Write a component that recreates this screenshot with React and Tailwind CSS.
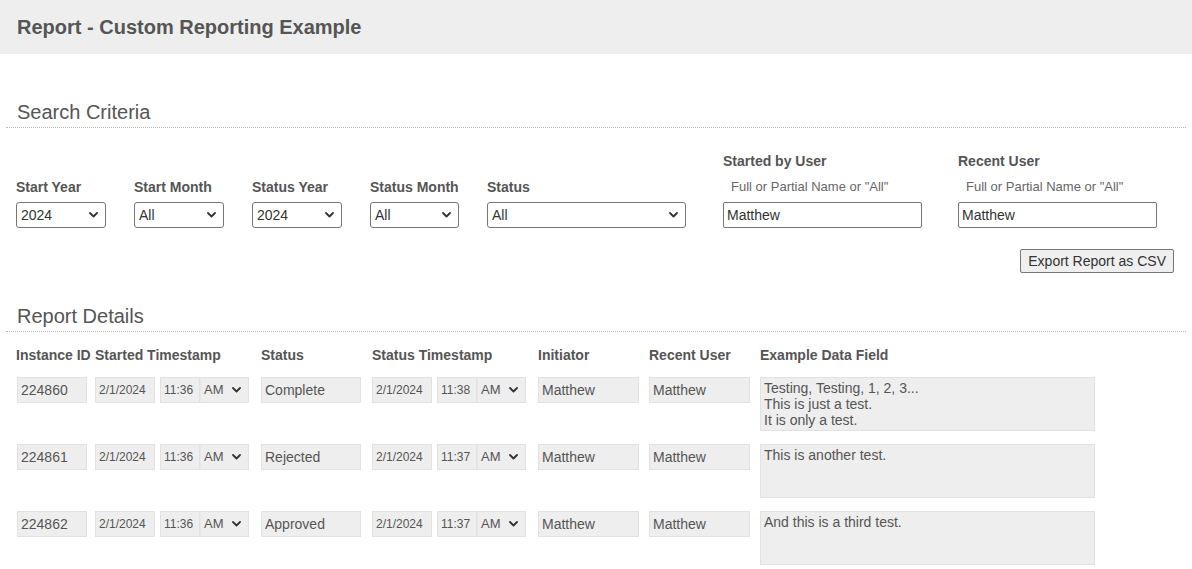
import React from "react";

const Chevron = ({ className = "" }) => (
  <svg
    className={`pointer-events-none absolute top-1/2 -translate-y-1/2 ${className}`}
    width="9"
    height="6"
    viewBox="0 0 9 6"
    fill="none"
  >
    <path d="M1 1l3.5 3.5L8 1" stroke="#333" strokeWidth="1.8" strokeLinecap="round" strokeLinejoin="round" />
  </svg>
);

const SearchSelect = ({ label, value, options, width }) => (
  <div className="flex flex-col" style={{ width }}>
    <label className="mb-[7px] text-[14px] font-bold leading-[16px] text-[#555]">{label}</label>
    <div className="relative h-[26px]">
      <select
        defaultValue={value}
        className="h-full w-full appearance-none rounded-[3px] border border-[#767676] bg-white pl-[4px] text-[14px] text-[#333] outline-none"
      >
        {options.map((o) => (
          <option key={o}>{o}</option>
        ))}
      </select>
      <Chevron className="right-[8px]" />
    </div>
  </div>
);

const UserFilter = ({ label, value }) => (
  <div className="flex w-[199px] flex-col">
    <label className="text-[14px] font-bold leading-[16px] text-[#555]">{label}</label>
    <span className="mt-[10px] mb-[7px] pl-[8px] text-[13px] leading-[16px] text-[#666]">
      Full or Partial Name or "All"
    </span>
    <input
      defaultValue={value}
      className="h-[26px] w-full rounded-[2px] border border-[#767676] bg-white pl-[3px] text-[14px] text-[#333] outline-none"
    />
  </div>
);

const SectionHeading = ({ children }) => (
  <div className="mx-[6px] border-b border-dotted border-[#bbb] pb-[3px] pl-[11px] text-[20px] leading-[24px] text-[#555]">
    {children}
  </div>
);

const Field = ({ children, small = false, className = "" }) => (
  <div
    className={`flex h-[26px] shrink-0 items-center border border-[#e2e2e2] bg-[#eeeeee] pl-[3px] text-[#555] ${
      small ? "text-[12px]" : "text-[14px]"
    } ${className}`}
  >
    {children}
  </div>
);

const Stamp = ({ date, time }) => (
  <div className="flex shrink-0">
    <Field small className="w-[60px]">{date}</Field>
    <Field small className="ml-[5px] w-[40px]">{time}</Field>
    <div className="relative flex h-[26px] w-[49px] items-center border border-[#e2e2e2] border-l-[#e8e8e8] bg-[#eeeeee] pl-[3px] text-[13px] text-[#555]">
      AM
      <Chevron className="right-[7px]" />
    </div>
  </div>
);

const rows = [
  {
    id: "224860",
    start: "11:36",
    status: "Complete",
    statusTime: "11:38",
    data: "Testing, Testing, 1, 2, 3...\nThis is just a test.\nIt is only a test.",
  },
  { id: "224861", start: "11:36", status: "Rejected", statusTime: "11:37", data: "This is another test." },
  { id: "224862", start: "11:36", status: "Approved", statusTime: "11:37", data: "And this is a third test." },
];

const headers = [
  { label: "Instance ID", cls: "w-[79px] ml-[16px]" },
  { label: "Started Timestamp", cls: "w-[166px]" },
  { label: "Status", cls: "w-[111px]" },
  { label: "Status Timestamp", cls: "w-[166px]" },
  { label: "Initiator", cls: "w-[111px]" },
  { label: "Recent User", cls: "w-[111px]" },
  { label: "Example Data Field", cls: "" },
];

export default function App() {
  const years = ["2024", "2023", "2022"];
  const months = ["All", "January", "February", "March"];
  return (
    <div className="min-h-screen bg-white font-['Liberation_Sans',Arial,sans-serif] text-[#555]">
      {/* Title bar */}
      <div className="flex h-[54px] items-center bg-[#eeeeee] pl-[17px]">
        <h1 className="text-[20px] font-bold text-[#555]">Report - Custom Reporting Example</h1>
      </div>

      <div className="pt-[46px]">
        <SectionHeading>Search Criteria</SectionHeading>

        {/* Filters */}
        <div className="mt-[25px] flex items-end pl-[16px]">
          <SearchSelect label="Start Year" value="2024" options={years} width={90} />
          <div className="ml-[28px]">
            <SearchSelect label="Start Month" value="All" options={months} width={90} />
          </div>
          <div className="ml-[28px]">
            <SearchSelect label="Status Year" value="2024" options={years} width={90} />
          </div>
          <div className="ml-[28px]">
            <SearchSelect label="Status Month" value="All" options={months} width={89} />
          </div>
          <div className="ml-[28px]">
            <SearchSelect label="Status" value="All" options={["All", "Complete", "Rejected", "Approved"]} width={199} />
          </div>
          <div className="ml-[37px]">
            <UserFilter label="Started by User" value="Matthew" />
          </div>
          <div className="ml-[36px]">
            <UserFilter label="Recent User" value="Matthew" />
          </div>
        </div>

        <div className="mt-[21px] flex justify-end pr-[18px]">
          <button className="h-[24px] rounded-[2px] border border-[#767676] bg-[#efefef] px-[7px] text-[14px] text-[#333]">
            Export Report as CSV
          </button>
        </div>

        <div className="mt-[31px]">
          <SectionHeading>Report Details</SectionHeading>
        </div>

        {/* Table header */}
        <div className="mt-[15px] flex text-[14px] font-bold leading-[16px] text-[#555]">
          {headers.map((h) => (
            <div key={h.label} className={`shrink-0 ${h.cls}`}>
              {h.label}
            </div>
          ))}
        </div>

        {/* Rows */}
        <div className="mt-[14px] flex flex-col gap-[13px] pl-[17px]">
          {rows.map((r) => (
            <div key={r.id} className="flex items-start">
              <Field className="w-[70px]">{r.id}</Field>
              <div className="ml-[8px]">
                <Stamp date="2/1/2024" time={r.start} />
              </div>
              <Field className="ml-[12px] w-[100px]">{r.status}</Field>
              <div className="ml-[11px]">
                <Stamp date="2/1/2024" time={r.statusTime} />
              </div>
              <Field className="ml-[12px] w-[101px]">Matthew</Field>
              <Field className="ml-[10px] w-[101px]">Matthew</Field>
              <div className="ml-[10px] h-[54px] w-[335px] shrink-0 whitespace-pre-line border border-[#e2e2e2] bg-[#eeeeee] pt-[2px] pl-[3px] text-[14px] leading-[16px] text-[#555]">
                {r.data}
              </div>
            </div>
          ))}
        </div>
      </div>
    </div>
  );
}
